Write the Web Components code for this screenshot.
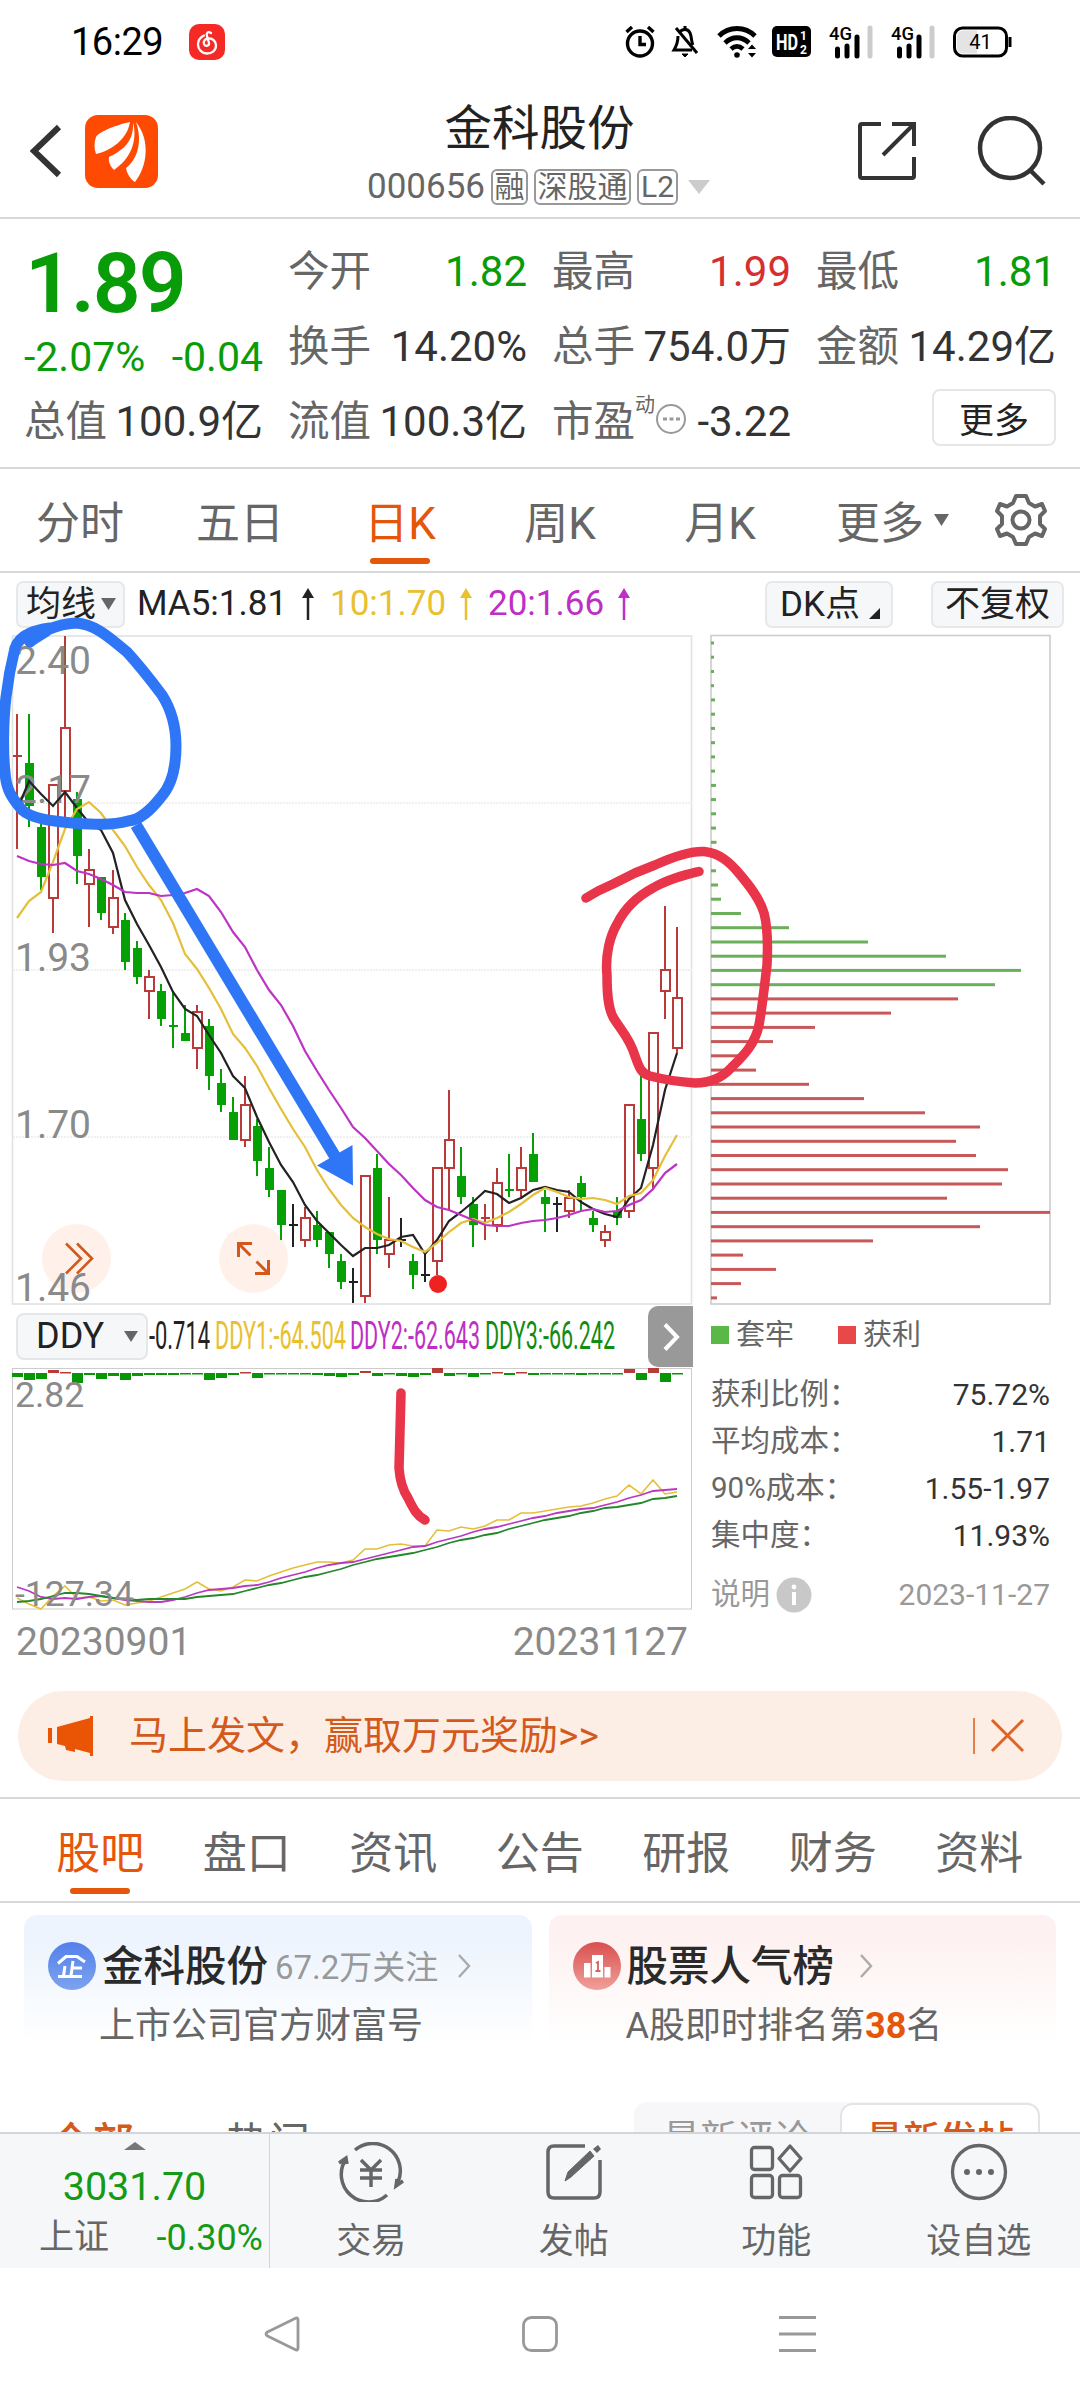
<!DOCTYPE html>
<html lang="zh-CN">
<head>
<meta charset="utf-8">
<title>金科股份 000656</title>
<style>
    body {
        margin: 0;
        width: 1080px;
        height: 2400px;
        overflow: hidden;
        position: relative;
        background: #fff;
        color: #333;
        font-family: Roboto, "Noto Sans CJK SC", sans-serif;
        font-weight: 400;

        --orange: #e6560a;
        --green: #089c08;
        --red: #d62f2f;
        --line: #d8d8d8;
        --grey: #666;
    }

    .charts {
        display: grid;
        grid-template-columns: 700px 380px;
        height: 1061px;
    }

    .feed {
        height: 229px;
        overflow: hidden;
    }

    .cards {
        display: flex;
        gap: 17px;
        padding: 12px 24px 0 24px;
    }
</style>
</head>
<body>
    <status-bar></status-bar>
    <stock-header name="金科股份" code="000656"></stock-header>
    <quote-panel></quote-panel>
    <period-tabs></period-tabs>
    <ma-toolbar></ma-toolbar>
    <div class="charts">
        <div>
            <k-chart></k-chart>
            <ddy-bar></ddy-bar>
            <ddy-chart></ddy-chart>
        </div>
        <chip-panel></chip-panel>
    </div>
    <promo-banner>马上发文，赢取万元奖励&gt;&gt;</promo-banner>
    <section-tabs></section-tabs>
    <div class="feed">
        <div class="cards">
            <info-card kind="blue">
                <svg slot="icon" width="48" height="48" viewBox="0 0 48 48">
                    <defs><linearGradient id="b" x2="0" y2="1"><stop stop-color="#5480ea"/><stop offset="1" stop-color="#7da3ee"/></linearGradient></defs>
                    <circle cx="24" cy="24" r="24" fill="url(#b)"/>
                    <path d="M10 21.500L18 14.500H29L37 20M25 19L23 34M17 24L15.500 34M24 26H34M10 34.500H34" fill="none" stroke="#fff" stroke-width="3"/>
                </svg>
                <span slot="title">金科股份</span>
                <span slot="extra">67.2万关注</span>
                上市公司官方财富号
            </info-card>
            <info-card kind="red">
                <svg slot="icon" width="48" height="48" viewBox="0 0 48 48">
                    <defs><linearGradient id="r" x2="0" y2="1"><stop stop-color="#d94f4f"/><stop offset="1" stop-color="#f0a09a"/></linearGradient></defs>
                    <circle cx="24" cy="24" r="24" fill="url(#r)"/>
                    <path d="M11 21h6.500v14.500H11zM19 13h11v22.500H19zM31.500 25h6v10.500h-6z" fill="#fff"/>
                    <path d="M23 21l2-1v9M22.500 29h5" fill="none" stroke="#d9605c" stroke-width="1.800"/>
                </svg>
                <span slot="title">股票人气榜</span>
                A股即时排名第<b style="color:#e6560a">38</b>名
            </info-card>
        </div>
        <feed-filter></feed-filter>
    </div>
    <bottom-bar></bottom-bar>
    <system-nav></system-nav>
    <hand-marks></hand-marks>

<script>
// attaches an open shadow root holding the given markup
class Base extends HTMLElement {
    constructor(){
        super();
        this.attachShadow({mode: 'open'});
    }
    draw(html){
        const template = document.createElement('template');
        template.innerHTML = html;
        this.shadowRoot.appendChild(template.content.cloneNode(true));
    }
}

class StatusBar extends Base {
    connectedCallback(){
        const signal = `
        <svg width="46" height="34" viewBox="0 0 46 34" overflow="visible">
            <text x="0" y="14.500" font-size="19" font-weight="500" textLength="23" lengthAdjust="spacingAndGlyphs">4G</text>
            <path d="M8.500 24v7M18 21v10M28 12v19" stroke="#000" stroke-width="5" stroke-linecap="round"/>
            <path d="M41 3v28" stroke="#ccc" stroke-width="5" stroke-linecap="round"/>
        </svg>`;
        this.draw(`
<style>
    :host {
        display: flex;
        align-items: center;
        height: 84px;
        padding: 0 67px 0 71px;
        box-sizing: border-box;
        color: #000;
    }
    .time { font-size: 38px; width: 118px; letter-spacing: -.5px; line-height: 84px; }
    .icons { margin-left: auto; display: flex; align-items: center; }
</style>
<span class="time">16:29</span>
<svg width="36" height="36" viewBox="0 0 36 36">
    <rect width="36" height="36" rx="10" fill="#f52a26"/>
    <path d="M22 9c-3-2-5 0-4 3l2 7c.5 3-4 4-5 1-.8-3 1-5 4-5.500 5-.5 8 3 8 7 0 5-4 8-9 8s-9-4-9-9c0-4 2-7 6-9" fill="none" stroke="#fff" stroke-width="2.300" stroke-linecap="round"/>
</svg>
<div class="icons">
    <svg width="30" height="34" viewBox="0 0 30 34" fill="none" stroke="#000" stroke-width="3.400">
        <circle cx="15" cy="18.500" r="12.500"/><path d="M15 11v8.500h6M1.500 7L7 2M28.500 7L23 2"/>
    </svg>
    <svg style="margin-left:16px" width="28" height="34" viewBox="0 0 28 34" fill="none" stroke="#000" stroke-width="3">
        <path d="M9 7c2-3 8-4 10 1 2 4 1 9 3 12M7 11c0 6-1 9-4 14h18"/><path d="M5 3l21 25"/><path d="M11 29h6l-3 3z" fill="#000" stroke-width="1"/><path d="M14 1v4"/>
    </svg>
    <svg style="margin-left:18px" width="42" height="34" viewBox="0 0 42 34" fill="none" stroke="#000" stroke-width="4.800">
        <path d="M2 11C12 1 28 1 38 11M8 18c7-7 17-7 24 0M14 24c4-3.500 8-3.500 12 0"/><circle cx="20" cy="30" r="2.800" fill="#000" stroke="none"/>
        <path d="M31 24l4-4.500 4 4.500zM31 28l4 4.500 4-4.500z" fill="#000" stroke="none"/>
    </svg>
    <svg style="margin-left:13px" width="40" height="32" viewBox="0 0 40 32">
        <rect width="39" height="31" rx="5"/>
        <text x="4" y="24" font-size="22" font-weight="700" fill="#fff" textLength="22" lengthAdjust="spacingAndGlyphs">HD</text>
        <text x="28" y="14" font-size="12" font-weight="700" fill="#fff">1</text>
        <text x="28" y="28" font-size="12" font-weight="700" fill="#fff">2</text>
    </svg>
    <span style="width:17px"></span>${signal}<span style="width:16px"></span>${signal}
    <svg style="margin-left:16px" width="60" height="32" viewBox="0 0 60 32">
        <rect x="1.500" y="2" width="52" height="28" rx="8" fill="#fff" stroke="#000" stroke-width="3"/>
        <path d="M10 4.500h14v23H10q-6 0-6-6v-11q0-6 6-6z" fill="#e4e4e4"/>
        <path d="M57 11v10" stroke="#000" stroke-width="3"/>
        <text x="27.500" y="23" font-size="20" text-anchor="middle">41</text>
    </svg>
</div>`);
    }
}
customElements.define('status-bar', StatusBar);

class StockHeader extends Base {
    connectedCallback(){
        this.draw(`
<style>
    :host {
        display: grid;
        grid-template-columns: 360px 360px 360px;
        height: 135px;
        box-sizing: border-box;
        border-bottom: 2px solid var(--line);
    }
    .left { display: flex; align-items: center; padding: 1px 0 0 29px; }
    .mid { text-align: center; }
    h1 { margin: 17px 1px 0 0; font-size: 47.500px; line-height: 56px; font-weight: 400; color: #222; }
    .sub { display: flex; align-items: center; gap: 6px; font-size: 35px; line-height: 40px; color: var(--grey); margin: 10px 0 0 7px; }
    .tag {
        border: 2px solid #999;
        border-radius: 6px;
        height: 32px;
        line-height: 32px;
        font-size: 30px;
        padding: 0 1.500px;
    }
    .right { display: flex; align-items: center; padding: 0 0 0 137px; gap: 60px; }
</style>
<div class="left">
    <svg width="34" height="56" viewBox="0 0 34 56"><path d="M30 4L5 28 30 52" fill="none" stroke="#333" stroke-width="6"/></svg>
    <svg style="margin-left:22px" width="73" height="73" viewBox="0 0 73 73">
        <rect width="73" height="73" rx="13" fill="#ff4a03"/>
        <path d="M45 7C35 9 14 16 11 22 9 27 9 34 11 39 25 36 42 25 45 7z" fill="#fff"/>
        <path d="M48 7C49 24 41 34 24 42c-1 5 2 10 5 13C45 44 53 27 48 7z" fill="#fff"/>
        <path d="M51 7c7 20 1 38-10 46 1 6 5 12 9 14C62 52 66 26 51 7z" fill="#fff"/>
    </svg>
</div>
<div class="mid">
    <h1>${this.getAttribute('name')}</h1>
    <div class="sub">
        <span>${this.getAttribute('code')}</span>
        <span class="tag">融</span><span class="tag">深股通</span><span class="tag" style="padding:0 2px">L2</span>
        <svg width="24" height="16" viewBox="0 0 24 16" style="margin-left:3px"><path d="M1 1h22L12 15z" fill="#ccc"/></svg>
    </div>
</div>
<div class="right">
    <svg width="60" height="60" viewBox="0 0 60 60" fill="none" stroke="#333" stroke-width="4">
        <path d="M24 3H5q-2 0-2 2V55q0 2 2 2H55q2 0 2-2V36"/><path d="M35 3H57V25M57 3L26 34"/>
    </svg>
    <svg width="70" height="70" viewBox="0 0 70 70" fill="none" stroke="#333" stroke-width="4.500">
        <circle cx="33" cy="32" r="30"/><path d="M53 54L67 68"/>
    </svg>
</div>`);
    }
}
customElements.define('stock-header', StockHeader);

class QuotePanel extends Base {
    connectedCallback(){
        this.draw(`
<style>
    :host {
        display: grid;
        grid-template-columns: 239px 239px 239px 240px;
        grid-template-rows: 75px 75px 75px;
        column-gap: 25px;
        height: 250px;
        padding: 15px 0 0 24px;
        box-sizing: border-box;
        border-bottom: 2px solid var(--line);
        font-size: 42px;
    }
    .item { display: flex; align-items: center; justify-content: space-between; white-space: nowrap; line-height: 60px; }
    .item span:first-child { color: var(--grey); font-size: 41.500px; }
    .price { grid-row: 1 / 3; color: var(--green); }
    .price b { display: block; font-size: 84px; line-height: 90px; font-weight: 600; letter-spacing: -2px; margin: 5px 0 0 1px; }
    .price div { display: flex; justify-content: space-between; line-height: 48px; margin-top: 4px; font-size: 41px; }
    .green { color: var(--green); }
    .red { color: var(--red); }
    sup { font-size: 20px; line-height: 20px; vertical-align: 24px; }
    button {
        justify-self: end;
        margin-top: 5px;
        width: 124px;
        height: 57px;
        border: 2px solid #e6e6e6;
        border-radius: 8px;
        background: #fff;
        color: #222;
        font: 35px Roboto, "Noto Sans CJK SC", sans-serif;
        padding: 0;
    }
</style>
<div class="price"><b>1.89</b><div><span>-2.07%</span><span>-0.04</span></div></div>
<div class="item"><span>今开</span><span class="green">1.82</span></div>
<div class="item"><span>最高</span><span class="red">1.99</span></div>
<div class="item"><span>最低</span><span class="green">1.81</span></div>
<div class="item"><span>换手</span><span>14.20%</span></div>
<div class="item"><span>总手</span><span>754.0万</span></div>
<div class="item"><span>金额</span><span>14.29亿</span></div>
<div class="item"><span>总值</span><span>100.9亿</span></div>
<div class="item"><span>流值</span><span>100.3亿</span></div>
<div class="item"><span>市盈<sup>动</sup><svg width="32" height="32" viewBox="0 0 32 32" style="vertical-align:1px"><circle cx="16" cy="16" r="14" fill="none" stroke="#999" stroke-width="2"/><path d="M8 16h4M14.500 16h4M21 16h4" stroke="#999" stroke-width="3"/></svg></span><span>-3.22</span></div>
<button>更多</button>`);
    }
}
customElements.define('quote-panel', QuotePanel);

class PeriodTabs extends Base {
    connectedCallback(){
        this.draw(`
<style>
    :host {
        display: grid;
        grid-template-columns: repeat(6, 160px) 120px;
        height: 104px;
        box-sizing: border-box;
        border-bottom: 2px solid var(--line);
        font-size: 44px;
        color: var(--grey);
    }
    span { display: flex; flex-direction: column; align-items: center; line-height: 60px; padding-top: 25px; position: relative; }
    .on { color: var(--orange); }
    .on::after { content: ""; width: 60px; height: 6px; border-radius: 3px; background: var(--orange); margin-top: 4px; }
    .drop { position: absolute; left: 133px; top: 44px; }
    .gear { margin: 23px 0 0 33px; }
</style>
<span>分时</span><span>五日</span><span class="on">日K</span><span>周K</span><span>月K</span>
<span>更多<svg class="drop" width="17" height="14" viewBox="0 0 17 14"><path d="M1 1h15L8.500 13z" fill="#666"/></svg></span>
<svg class="gear" width="56" height="56" viewBox="-28 -28 56 56" fill="none" stroke="#666" stroke-width="4" stroke-linejoin="round">
    <path d="M-5-24H5L8-17 14-13.500 21-16 24-9 19-4V4L24 9 21 16 14 13.500 8 17 5 24H-5L-8 17-14 13.500-21 16-24 9-19 4V-4L-24-9-21-16-14-13.500-8-17z"/>
    <circle r="8.500"/>
</svg>`);
    }
}
customElements.define('period-tabs', PeriodTabs);

class MaToolbar extends Base {
    connectedCallback(){
        const up = '<svg width="12" height="32" viewBox="0 0 12 32"><path d="M6 5V32" stroke="currentColor" stroke-width="2.500"/><path d="M6 0L12 10H0z" fill="currentColor"/></svg>';
        this.draw(`
<style>
    :host { display: flex; align-items: center; height: 57px; padding: 5px 16px 0 16px; box-sizing: border-box; color: #222; font-size: 35px; line-height: 46px; }
    .btn { height: 47px; box-sizing: border-box; border: 2px solid #e6e8ec; border-radius: 7px; background: #f6f7f9; font-size: 35px; line-height: 43px; display: flex; align-items: center; }
    .val { display: flex; align-items: center; justify-content: space-between; }
</style>
<div class="btn" style="width:109px;padding-left:8px">均线<svg width="17" height="14" viewBox="0 0 17 14" style="margin-left:4px"><path d="M1 1h15L8.500 13z" fill="#666"/></svg></div>
<div class="val" style="width:177px;margin-left:12px">MA5:1.81${up}</div>
<div class="val" style="width:142px;margin-left:16px;color:#e8c030">10:1.70${up}</div>
<div class="val" style="width:142px;margin-left:16px;color:#bd2fc5">20:1.66${up}</div>
<div class="btn" style="width:128px;margin-left:auto;padding-left:13px">DK点<svg width="12" height="12" viewBox="0 0 12 12" style="margin:20px 0 0 9px"><path d="M11 0V11H0z" fill="#222"/></svg></div>
<div class="btn" style="width:133px;margin-left:38px;padding-left:12px">不复权</div>`);
    }
}
customElements.define('ma-toolbar', MaToolbar);

const STEP = 12, FIRST = 17;
const RED = '#b93a38', GREEN = '#04a004', BLACK = '#222';

// [colour, high, low, body top, body bottom], all in screen y
const CANDLES = [
    ['r',714,849,756,756], ['g',714,827,763,806], ['g',824,890,827,877], ['r',784,933,784,899],
    ['r',636,820,727,792], ['g',792,884,799,856], ['r',849,927,869,885], ['g',877,920,877,913],
    ['r',870,934,897,928], ['g',913,970,920,962], ['g',941,984,948,977], ['r',970,1019,976,992],
    ['g',984,1026,991,1019], ['g',991,1048,1026,1026], ['g',1005,1041,1033,1041], ['r',1005,1069,1011,1049],
    ['g',1019,1090,1026,1076], ['g',1069,1112,1083,1105], ['g',1097,1140,1112,1140], ['r',1076,1147,1104,1141],
    ['g',1119,1176,1126,1161], ['g',1147,1197,1168,1190], ['g',1190,1240,1190,1225], ['k',1204,1247,1225,1225],
    ['r',1207,1247,1217,1241], ['g',1211,1247,1225,1240], ['g',1232,1268,1232,1254], ['g',1254,1289,1261,1282],
    ['k',1268,1303,1282,1282], ['r',1175,1303,1175,1297], ['g',1154,1254,1168,1240], ['r',1197,1268,1239,1255],
    ['k',1218,1247,1240,1240], ['g',1254,1289,1261,1275], ['k',1254,1282,1275,1275], ['r',1167,1275,1167,1262],
    ['r',1090,1210,1139,1169], ['g',1147,1204,1176,1197], ['g',1197,1247,1204,1225], ['r',1204,1240,1218,1218],
    ['r',1168,1232,1182,1226], ['g',1154,1197,1190,1190], ['r',1147,1197,1167,1191], ['g',1133,1182,1154,1182],
    ['g',1190,1232,1197,1204], ['k',1197,1232,1204,1204], ['r',1190,1218,1197,1212], ['g',1176,1211,1183,1197],
    ['g',1211,1232,1218,1225], ['r',1225,1247,1231,1241], ['g',1197,1225,1211,1218], ['r',1104,1218,1104,1212],
    ['g',1076,1161,1119,1154], ['r',1032,1190,1032,1169], ['r',906,1019,969,992], ['r',927,1053,997,1049]
];
const MA5 = [810,781,794,806,792,808,823,830,853,900,924,945,967,992,1009,1016,1035,1053,1076,1088,1117,1142,1165,1182,1205,1221,1233,1245,1256,1248,1248,1245,1237,1235,1254,1240,1221,1212,1202,1191,1194,1203,1198,1190,1187,1190,1192,1202,1209,1214,1217,1199,1188,1145,1090,1053];
const MA10 = [918,901,892,862,829,809,802,813,830,846,867,885,900,923,954,969,988,1009,1034,1048,1066,1088,1109,1129,1147,1170,1189,1205,1218,1227,1234,1239,1241,1247,1252,1243,1232,1223,1219,1223,1218,1212,1204,1195,1188,1192,1197,1199,1198,1200,1204,1196,1193,1180,1156,1135];
const MA20 = [856,861,864,865,863,871,874,879,885,892,893,893,896,895,893,889,896,912,932,947,970,990,1005,1026,1051,1071,1090,1108,1127,1138,1151,1164,1175,1188,1200,1207,1210,1215,1220,1225,1226,1226,1223,1221,1220,1218,1215,1211,1209,1212,1211,1205,1200,1189,1173,1164];

function series(values, color, width){
    const points = values.map((y, i) => (FIRST + STEP * i) + ',' + y).join(' ');
    return `<polyline points="${points}" fill="none" stroke="${color}" stroke-width="${width}"/>`;
}

function candle([kind, high, low, top, bottom], i){
    const x = FIRST + STEP * i;
    const color = kind == 'r' ? RED : kind == 'g' ? GREEN : BLACK;
    if (top == bottom) {
        return `<path d="M${x} ${high}V${low}M${x - 4} ${top}h9" stroke="${color}" stroke-width="2"/>`;
    }
    if (kind == 'r') {
        return `<path d="M${x} ${high}V${top}M${x} ${bottom}V${low}" stroke="${color}" stroke-width="2"/>
            <rect x="${x - 4}" y="${top + 1}" width="9" height="${bottom - top - 2}" fill="none" stroke="${color}" stroke-width="2"/>`;
    }
    return `<path d="M${x} ${high}V${low}" stroke="${color}" stroke-width="2"/><rect x="${x - 4}" y="${top}" width="9" height="${bottom - top}" fill="${color}"/>`;
}

class KChart extends Base {
    connectedCallback(){
        const grid = [803, 970, 1137].map(y => `<path d="M13 ${y}H692" stroke="#ececec" stroke-width="1.500" stroke-dasharray="2 1"/>`).join('');
        const labels = [['2.40',674],['2.17',803],['1.93',970.5],['1.70',1137.5],['1.46',1301]]
            .map(l => `<text x="15" y="${l[1]}">${l[0]}</text>`).join('');
        this.draw(`
<style>
    :host { display: block; height: 676px; }
    svg { display: block; overflow: visible; }
    text { font-size: 39px; fill: #8a8a8a; }
</style>
<svg width="700" height="676" viewBox="0 630 700 676">
    <rect x="12.500" y="636" width="679" height="668" fill="none" stroke="#e2e2e2" stroke-width="1.600"/>
    ${grid}
    <circle cx="76.500" cy="1258.500" r="34.500" fill="#fff1ea"/>
    <circle cx="253.500" cy="1258.500" r="34.500" fill="#fff1ea"/>
    <path d="M66 1243.500L81 1258.500 66 1273.500M77 1243.500L92 1258.500 77 1273.500" fill="none" stroke="#d3591b" stroke-width="2.600"/>
    <path d="M252 1243.500H238.500V1257M238.500 1243.500L250.500 1255.500M255 1273.500H268.500V1260M268.500 1273.500L256.500 1261.500" fill="none" stroke="#d3591b" stroke-width="3"/>
    ${CANDLES.map(candle).join('')}
    ${labels}
    ${series(MA5, BLACK, 2.2)}${series(MA10, '#e5bf3a', 2.2)}${series(MA20, '#bd33c4', 2.2)}
    <circle cx="438" cy="1284" r="9" fill="#ef2222"/>
</svg>`);
    }
}
customElements.define('k-chart', KChart);

class DdyBar extends Base {
    connectedCallback(){
        this.draw(`
<style>
    :host { display: flex; align-items: center; height: 61px; width: 693px; }
    .btn { width: 132px; height: 47px; box-sizing: border-box; border: 2px solid #e4e6ea; border-radius: 8px; background: #f6f7f9; margin-left: 16px; padding: 0 7px 0 18px; display: flex; align-items: center; justify-content: space-between; font-size: 36px; line-height: 43px; color: #222; }
    svg { overflow: visible; }
    text { font-size: 38px; }
    .more { width: 45px; height: 61px; background: #999; border-radius: 10px 0 0 10px; display: grid; place-items: center; margin-left: auto; }
</style>
<div class="btn">DDY<svg width="16" height="13" viewBox="0 0 16 13"><path d="M1 1h14L8 12z" fill="#666"/></svg></div>
<svg width="480" height="46" viewBox="148 1314 480 46">
    <text x="149" y="1349" fill="#222" textLength="61" lengthAdjust="spacingAndGlyphs">-0.714</text>
    <text x="215" y="1349" fill="#e8c030" textLength="131" lengthAdjust="spacingAndGlyphs">DDY1:-64.504</text>
    <text x="350" y="1349" fill="#bd2fc5" textLength="130" lengthAdjust="spacingAndGlyphs">DDY2:-62.643</text>
    <text x="485" y="1349" fill="#128c12" textLength="130" lengthAdjust="spacingAndGlyphs">DDY3:-66.242</text>
</svg>
<div class="more"><svg width="20" height="30" viewBox="0 0 20 30"><path d="M4 2.500L16 15 4 27.500" fill="none" stroke="#fff" stroke-width="4"/></svg></div>`);
    }
}
customElements.define('ddy-bar', DdyBar);

// bar ends around the zero line; smaller than ZERO means a rising (red) bar
const ZERO = 1373;
const BARS = [1377,1380,1379,1370,1372,1383,1375,1379,1376,1380,1376,1375,1375,1375,1374,1374,1380,1378,1375,1372,1378,1374,1374,1374,1374,1375,1376,1377,1375,1371,1376,1374,1376,1377,1375,1368,1376,1374,1377,1374,1372,1375,1372,1375,1374,1374,1374,1375,1374,1374,1374,1369,1380,1368,1382,1374];
const DDY1 = [1598,1604,1609,1596,1586,1598,1597,1601,1600,1605,1603,1601,1597,1593,1589,1582,1589,1591,1587,1580,1581,1576,1572,1568,1565,1562,1562,1563,1560,1549,1549,1545,1544,1546,1546,1530,1531,1527,1529,1526,1520,1520,1513,1513,1511,1509,1507,1506,1503,1499,1496,1485,1494,1480,1494,1492];
const DDY2 = [1587,1591,1597,1599,1598,1599,1597,1596,1598,1600,1601,1602,1602,1600,1597,1593,1590,1589,1588,1586,1585,1582,1578,1575,1572,1568,1565,1563,1562,1559,1556,1553,1550,1547,1546,1542,1539,1536,1532,1529,1527,1524,1521,1518,1516,1513,1511,1509,1508,1505,1502,1498,1495,1491,1490,1489];
const DDY3 = [1602,1601,1599,1596,1593,1593,1594,1596,1598,1599,1600,1599,1599,1599,1599,1597,1596,1595,1594,1591,1588,1585,1583,1580,1577,1575,1572,1569,1565,1562,1559,1557,1555,1553,1550,1547,1543,1540,1538,1535,1533,1529,1526,1523,1520,1518,1516,1513,1511,1508,1507,1505,1503,1499,1498,1496];

class DdyChart extends Base {
    connectedCallback(){
        const bars = BARS.map((y, i) => {
            const top = Math.min(y, ZERO);
            const height = Math.max(1.5, Math.abs(y - ZERO));
            return `<rect x="${12 + STEP * i}" y="${top}" width="11" height="${height}" fill="${y < ZERO ? RED : '#069606'}"/>`;
        }).join('');
        this.draw(`
<style>
    :host { display: block; width: 692px; }
    svg { display: block; overflow: visible; }
    text { font-size: 35.500px; fill: #8a8a8a; }
    .dates { display: flex; justify-content: space-between; padding: 0 4px 0 16px; font-size: 39px; line-height: 46px; margin-top: 9px; color: #8a8a8a; }
</style>
<svg width="700" height="243" viewBox="0 1367 700 243">
    <rect x="12.500" y="1368.500" width="679" height="240.500" fill="none" stroke="#ccc"/>
    ${bars}
    ${series(DDY1, '#e5bf3a', 1.6)}${series(DDY2, '#b93ac0', 1.8)}${series(DDY3, '#23882a', 1.8)}
    <text x="15" y="1407">2.82</text>
    <text x="15" y="1606">-127.34</text>
</svg>
<div class="dates"><span>20230901</span><span>20231127</span></div>`);
    }
}
customElements.define('ddy-chart', DdyChart);

const CHIPS = [3,3,3,3,4,4,4,4,4,4,5,5,5,5,5.5,6,5,7,10,30,78,157,235,310,284,247,180,104,62,35,45,98,153,214,269,245,265,297,291,236,339,269,162,32,65,30,6];
class ChipPanel extends Base {
    connectedCallback(){
        const lines = CHIPS.map((w, i) => `<rect x="711" y="${(641.5 + 14.236 * i).toFixed(1)}" width="${w}" height="3" fill="${i < 25 ? '#6aaf59' : '#c85858'}"/>`).join('');
        this.draw(`
<style>
    :host { display: block; padding-right: 30px; margin-left: 11px; font-size: 29.500px; color: #666; }
    svg { display: block; }
    .legend { display: flex; align-items: center; height: 40px; margin-top: 9px; font-size: 29px; line-height: 40px; }
    .legend i { width: 18px; height: 18px; margin-right: 7px; }
    .row { display: flex; justify-content: space-between; height: 47px; line-height: 47px; }
    .row span:last-child { color: #333; font-size: 30px; }
    .note { margin-top: 12px; color: #999; }
    .note span { display: flex; align-items: center; }
    .row.note span:last-child { color: #999; }
</style>
<svg width="341" height="676" viewBox="711 630 341 676" overflow="visible">
    <rect x="711" y="635.500" width="339" height="668.500" fill="none" stroke="#ccc" stroke-width="1.600"/>
    ${lines}
</svg>
<div class="legend"><i style="background:#5ab946"></i>套牢<i style="background:#e84848;margin-left:44px"></i>获利</div>
<div style="height:16px"></div>
<div class="row"><span>获利比例：</span><span>75.72%</span></div>
<div class="row"><span>平均成本：</span><span>1.71</span></div>
<div class="row"><span>90%成本：</span><span>1.55-1.97</span></div>
<div class="row"><span>集中度：</span><span>11.93%</span></div>
<div class="row note"><span>说明<svg style="margin-left:6px" width="36" height="36" viewBox="0 0 36 36"><circle cx="18" cy="18" r="17.500" fill="#c8c8c8"/><circle cx="18" cy="10" r="2.400" fill="#fff"/><path d="M18 15v13" stroke="#fff" stroke-width="4"/></svg></span><span>2023-11-27</span></div>`);
    }
}
customElements.define('chip-panel', ChipPanel);

class PromoBanner extends Base {
    connectedCallback(){
        this.draw(`
<style>
    :host { display: flex; align-items: center; box-sizing: border-box; height: 90px; margin: 0 18px; padding: 0 37px 0 30px; border-radius: 45px; background: #fceee5; color: #d45a1c; font-size: 39px; line-height: 94px; }
    .text { margin-left: 35px; }
    .close { margin-left: auto; }
</style>
<svg width="46" height="42" viewBox="0 0 46 42" fill="#e95504"><path d="M0 13h4v15H0zM9 12L42 3V1h3V41h-3V38L27 34v3l-9-2-1-4-8-2z"/></svg>
<span class="text"><slot></slot></span>
<svg class="close" width="54" height="40" viewBox="0 0 54 40" fill="none" stroke="#df6322"><path d="M3 2V38" stroke-width="1.600"/><path d="M21 4L52 35M52 4L21 35" stroke-width="3"/></svg>`);
    }
}
customElements.define('promo-banner', PromoBanner);

class SectionTabs extends Base {
    connectedCallback(){
        const tabs = ['股吧', '盘口', '资讯', '公告', '研报', '财务', '资料'];
        this.draw(`
<style>
    :host { display: grid; grid-template-columns: repeat(7, 146.500px); box-sizing: border-box; height: 106px; margin-top: 16px; padding-left: 27px; border: solid var(--line); border-width: 2px 0; color: var(--grey); font-size: 44px; line-height: 60px; }
    span { display: flex; flex-direction: column; align-items: center; padding-top: 25px; }
    span:first-of-type { color: var(--orange); }
    span:first-of-type::after { content: ""; width: 60px; height: 6px; border-radius: 3px; background: var(--orange); margin-top: 4px; }
</style>
${tabs.map(t => `<span>${t}</span>`).join('')}`);
    }
}
customElements.define('section-tabs', SectionTabs);

class InfoCard extends Base {
    connectedCallback(){
        this.draw(`
<style>
    :host { display: block; box-sizing: border-box; width: 508px; height: 130px; border-radius: 13px; background: linear-gradient(#edf4fd 20%, #fff); }
    :host([kind=red]) { background: linear-gradient(#fdf2f1 20%, #fff); }
    .top { display: flex; align-items: center; height: 102px; padding-left: 24px; }
    .title { font-size: 41.500px; line-height: 60px; font-weight: 500; color: #2a2a2a; margin: 2px 0 0 6px; }
    .extra { font-size: 33px; color: #999; margin: 4px 0 0 7px; line-height: 60px; }
    .arrow { margin-left: 19px; }
    :host([kind=red]) .arrow { margin-left: 18px; }
    p { margin: -16px 0 0 75px; font-size: 36px; line-height: 50px; color: var(--grey); }
    :host([kind=red]) p { margin-left: 77px; }
</style>
<div class="top">
    <slot name="icon"></slot>
    <span class="title"><slot name="title"></slot></span>
    <span class="extra"><slot name="extra"></slot></span>
    <svg class="arrow" width="14" height="26" viewBox="0 0 14 26"><path d="M2 2L12 13 2 24" fill="none" stroke="#aaa" stroke-width="2.400"/></svg>
</div>
<p><slot></slot></p>`);
    }
}
customElements.define('info-card', InfoCard);

class FeedFilter extends Base {
    connectedCallback(){
        this.draw(`
<style>
    :host { display: flex; margin-top: 57px; padding: 0 40px 0 50px; font-size: 42px; line-height: 60px; color: var(--grey); }
    .on { color: #d45a1c; font-weight: 500; }
    .tab { padding-top: 12px; }
    .switch { display: flex; margin-left: auto; width: 406px; height: 72px; border-radius: 13px; background: #f7f7f9; font-size: 37px; line-height: 76px; }
    .switch span { flex: 1; text-align: center; color: #999; }
    .switch .on { box-sizing: border-box; flex: none; width: 200px; border: 2px solid #e4e4e6; border-radius: 13px; background: #fff; color: #d45a1c; line-height: 72px; margin-top: 1px; }
</style>
<span class="tab on">全部</span><span class="tab" style="margin-left:92px">热门</span>
<div class="switch"><span>最新评论</span><span class="on">最新发帖</span></div>`);
    }
}
customElements.define('feed-filter', FeedFilter);

class BottomBar extends Base {
    connectedCallback(){
        this.draw(`
<style>
    :host { display: grid; grid-template-columns: 270px repeat(4, 1fr); box-sizing: border-box; height: 136px; border-top: 2px solid #d3d5d9; background: #f6f7f9; color: #666; font-size: 35px; }
    .index { border-right: 1px solid #d3d5d9; text-align: center; color: #149a14; font-size: 39.500px; }
    .index svg { display: block; margin: 8px auto 0; }
    .index b { display: block; font-weight: 400; line-height: 46px; margin-top: 14px; }
    .index div { display: flex; justify-content: space-between; padding: 0 6px 0 39px; font-size: 36px; line-height: 46px; margin-top: 5px; }
    .index i { font-style: normal; font-size: 35px; color: #666; }
    .act { display: flex; flex-direction: column; align-items: center; line-height: 46px; padding-top: 8px; }
    .act svg { margin-bottom: 17px; }
</style>
<div class="index">
    <svg width="22" height="8" viewBox="0 0 22 8"><path d="M11 0L22 8H0z" fill="#777"/></svg>
    <b>3031.70</b><div><i>上证</i><span>-0.30%</span></div>
</div>
<div class="act"><svg width="66" height="60" viewBox="-33 -30 66 60" fill="none" stroke="#666" stroke-width="3.500">
    <path d="M-16-22A27.500 27.500 0 0 1 27 10M16 23A27.500 27.500 0 0 1-25-13M-32-9l7-5 1 6M32 9l-7 5 1-7"/>
    <path d="M-10-12L0-2 10-12M0-2V15M-11-2H11M-11 6H11"/></svg>交易</div>
<div class="act"><svg width="60" height="60" viewBox="-30 -30 60 60" fill="none" stroke="#666" stroke-width="3.500">
    <path d="M11-26H-20Q-26-26-26-20V20Q-26 26-20 26H20Q26 26 26 20V-12"/><path d="M-9 9L-6 0 16-21 20-16-3 5z" fill="#666" stroke-width="1"/><path d="M19-23L24-27 27-23 23-19z" fill="#666" stroke="none"/></svg>发帖</div>
<div class="act"><svg width="60" height="60" viewBox="-30 -30 60 60" fill="none" stroke="#666" stroke-width="3.300" stroke-linejoin="round">
    <rect x="-24.500" y="-24.500" width="21" height="22" rx="3"/><rect x="-24.500" y="3.500" width="21" height="22" rx="3"/><rect x="3.500" y="3.500" width="21" height="22" rx="3"/>
    <path d="M14-26L25-13.500 14-1 3-13.500z"/></svg>功能</div>
<div class="act"><svg width="60" height="60" viewBox="-30 -30 60 60"><circle r="26.500" fill="none" stroke="#666" stroke-width="3.300"/>
    <circle cx="-12" r="3" fill="#666"/><circle r="3" fill="#666"/><circle cx="12" r="3" fill="#666"/></svg>设自选</div>`);
    }
}
customElements.define('bottom-bar', BottomBar);

class SystemNav extends Base {
    connectedCallback(){
        this.draw(`
<style>
    :host { display: flex; justify-content: space-between; align-items: center; box-sizing: border-box; height: 132px; padding: 0 262px; }
</style>
<svg width="40" height="40" viewBox="0 0 40 40" fill="none" stroke="#999" stroke-width="2.800" stroke-linejoin="round"><path d="M33 4.500Q36 3 36 6V34Q36 37 33 35.500L5.500 22Q2.500 20 5.500 18z"/></svg>
<svg width="40" height="40" viewBox="0 0 40 40" fill="none" stroke="#999" stroke-width="2.800"><rect x="3.500" y="3.500" width="33" height="33" rx="8"/></svg>
<svg width="40" height="40" viewBox="0 0 40 40" stroke="#999" stroke-width="3"><path d="M1 3.500H38M1 20H38M1 36.500H38"/></svg>`);
    }
}
customElements.define('system-nav', SystemNav);

// finger-drawn notes lying over the whole screen
class HandMarks extends Base {
    connectedCallback(){
        this.draw(`
<style>
    :host { position: absolute; left: 0; top: 0; pointer-events: none; }
    svg { display: block; }
</style>
<svg width="1080" height="1700" viewBox="0 0 1080 1700" fill="none" stroke-linecap="round" stroke-linejoin="round">
    <g stroke="#2f76f6" stroke-width="11">
        <path d="M30 642C38 633 56 624 76 623C96 624 112 640 127 652C139 665 153 683 162 695C171 709 176 727 176 746C176 765 172 785 161 797C150 811 140 820 128 821C110 826 88 824 72 823C52 821 32 819 22 810C12 798 6 790 5 772C3 755 3 722 6 697C8 680 12 660 15 648C20 634 36 630 50 628"/>
        <path d="M26 636L30 641L46 631" stroke-width="12"/>
        <path d="M136 825L336 1158" stroke-width="12" stroke-linecap="butt"/>
    </g>
    <path d="M352.500 1145L317 1165.500 353 1185.500z" fill="#2f76f6"/>
    <g stroke="#e93549" stroke-width="9.500">
        <path d="M586 898L598 891L613 884L635 873L655 865C675 856 690 851 704 851.500C720 853 730 863 737 871C750 886 760 899 764 913C768 928 768 945 767 965C764 990 762 1009 759 1025C755 1045 742 1057 731 1068C720 1080 706 1083 695 1083C680 1082 662 1079 650 1076C640 1073 639 1066 635 1056C630 1038 620 1029 613 1017C608 1007 607 994 607 975C605 955 610 936 617 924C626 906 638 896 653 888C668 879 685 875 699 871.500"/>
        <path d="M401 1393L399 1468C400 1482 404 1492 408 1498C413 1508 416 1515 425 1520"/>
    </g>
</svg>`);
    }
}
customElements.define('hand-marks', HandMarks);
</script>
</body>
</html>
